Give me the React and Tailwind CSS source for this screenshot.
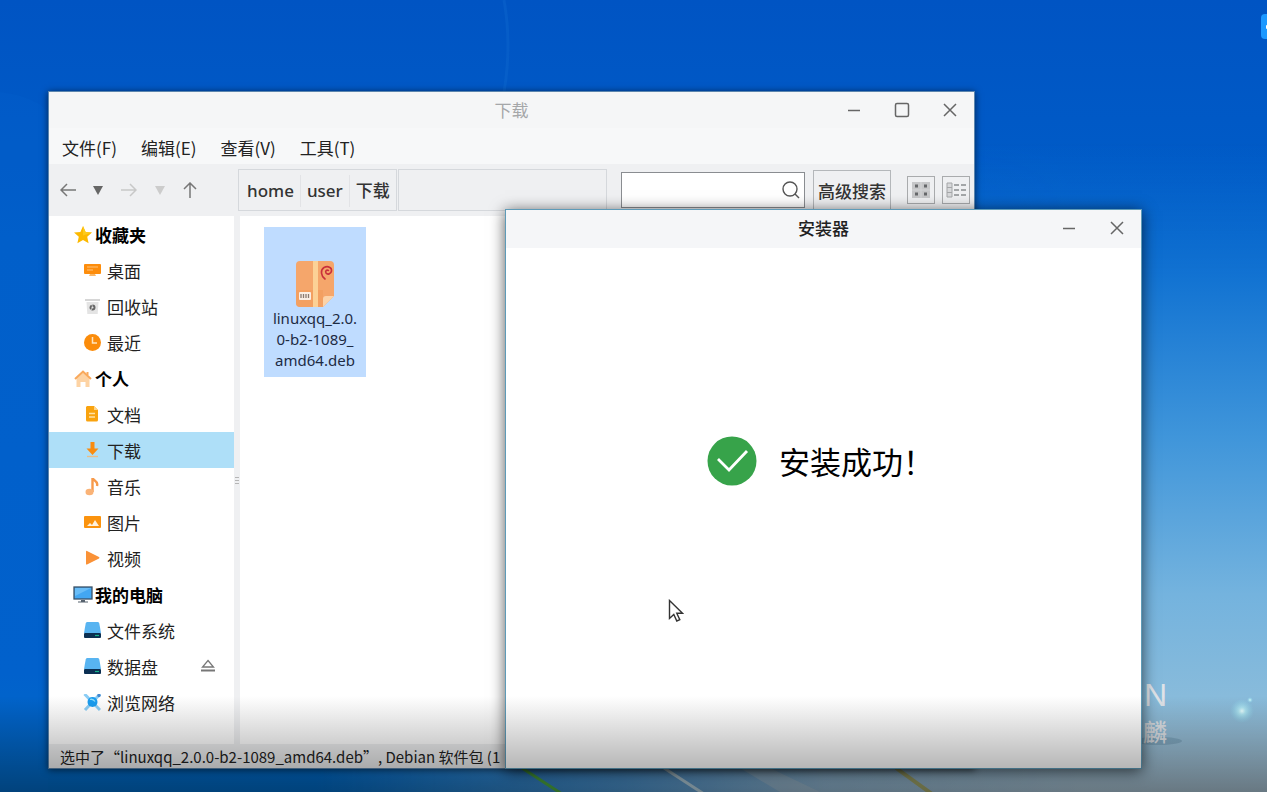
import React from 'react';

const cjk = "font-['Noto_Sans_CJK_SC',sans-serif]";
const latin = "font-['Noto_Sans','Noto_Sans_CJK_SC',sans-serif]";

/* ---------- sidebar icons ---------- */

const StarIcon = () => (
  <svg viewBox="0 0 20 20" className="size-5">
    <path d="M10 1l2.6 5.9 6.4.7-4.8 4.2 1.4 6.4L10 15l-5.6 3.2 1.4-6.4L1 7.6l6.4-.7z" fill="#fcb900" />
    <path d="M10 1l2.6 5.9 6.4.7-9 3z" fill="#fdca1c" />
  </svg>
);

const DesktopIcon = () => (
  <svg viewBox="0 0 18 18" className="size-[18px]">
    <rect x="1" y="2" width="17" height="10" rx="1" fill="#fd8d0c" />
    <path d="M4 5h11M4 8h6" stroke="#ffc27a" strokeWidth="1" />
    <path d="M7 12h5l1 2H6z" fill="#fbb765" />
  </svg>
);

const TrashIcon = () => (
  <svg viewBox="0 0 18 18" className="size-[18px]">
    <rect x="2" y="1" width="15" height="2" fill="#d6d6d6" />
    <path d="M3.500 4h12l-.8 12H4.300z" fill="#e4e4e4" />
    <circle cx="9.500" cy="9.500" r="2" fill="none" stroke="#666" strokeWidth="2" strokeDasharray="3.600 .6" />
  </svg>
);

const ClockIcon = () => (
  <svg viewBox="0 0 18 18" className="size-[18px]">
    <circle cx="9.500" cy="8.500" r="8.500" fill="#fb8c0b" />
    <path d="M9.500 3v6H14" fill="none" stroke="#ffe3bd" strokeWidth="1.500" />
  </svg>
);

const HomeIcon = () => (
  <svg viewBox="0 0 20 20" className="size-5">
    <path d="M3.500 9l6.500-6 6.500 6v9h-4v-5h-5v5h-4z" fill="#fdd3a4" />
    <path d="M2 10l8-7.500 8 7.500" fill="none" stroke="#f9a95c" strokeWidth="2" />
    <path d="M14.500 3v3" stroke="#f9a95c" strokeWidth="2" />
  </svg>
);

const DocIcon = () => (
  <svg viewBox="0 0 18 18" className="size-[18px]">
    <path d="M4 0h7l4 4v10a1.500 1.500 0 01-1.500 1.500h-9A1.500 1.500 0 013 14V1z" fill="#f9a30f" />
    <path d="M11 0l4 4h-4z" fill="#ffd58a" />
    <path d="M6 7.500h6M6 11h6" stroke="#ffe2a6" strokeWidth="1.400" />
  </svg>
);

const DownloadIcon = () => (
  <svg viewBox="0 0 18 18" className="size-[18px]">
    <path d="M7.500 0h4v6.500h4l-6 6.500-6-6.500h4z" fill="#f98c10" />
    <path d="M4 14.500h11" stroke="#e9bf8a" strokeWidth="1.400" />
  </svg>
);

const MusicIcon = () => (
  <svg viewBox="0 0 18 18" className="size-[18px]">
    <path d="M9.500 14V0c1.500 3.500 6 2.500 4.500 8" fill="none" stroke="#f79a4b" strokeWidth="2.400" />
    <ellipse cx="6.500" cy="14" rx="4" ry="3.200" fill="#fab377" />
  </svg>
);

const ImageIcon = () => (
  <svg viewBox="0 0 18 18" className="size-[18px]">
    <rect x="1" y="2" width="17" height="12" rx="1" fill="#fb930e" />
    <path d="M4 12l3-3 2 2 3-5 4 6z" fill="#fff1dd" />
  </svg>
);

const VideoIcon = () => (
  <svg viewBox="0 0 18 18" className="size-[18px]">
    <path d="M3 1.500q0-1 1-.5l12 6q1 .7 0 1.400l-12 6q-1 .5-1-.5z" fill="#fa9237" />
  </svg>
);

const ComputerIcon = () => (
  <svg viewBox="0 0 20 20" className="size-5">
    <rect x="1" y="2" width="18" height="12" fill="#43a7f2" stroke="#3b5166" strokeWidth="1.300" />
    <path d="M2 3h16L2 11z" fill="#69bdf7" />
    <path d="M8 15h4v1.500h3v1H5v-1h3z" fill="#56626e" />
  </svg>
);

const DiskIcon = () => (
  <svg viewBox="0 0 18 18" className="size-[18px]">
    <path d="M4 0h11q1 0 1.300 1.500L18 11H1L2.700 1.500Q3 0 4 0z" fill="#58b4f1" />
    <rect x="1" y="11" width="17" height="5" rx="1" fill="#0b2f52" />
    <path d="M12 13.500h4" stroke="#19b48b" strokeWidth="1.200" />
  </svg>
);

const NetworkIcon = () => (
  <svg viewBox="0 0 18 18" className="size-[18px]">
    <path d="M1.500 0l15.500 16M17 0L2 16" stroke="#8bcdf5" strokeWidth="3" />
    <circle cx="9.500" cy="8" r="5" fill="#1a9df0" />
    <path d="M7 5.500q3-1 5 2" fill="none" stroke="#8fe0fb" strokeWidth="1.300" />
    <circle cx="16" cy="1.500" r="1.700" fill="#4388cf" />
  </svg>
);

const EjectIcon = () => (
  <svg viewBox="0 0 16 14" className="h-3.5 w-4" fill="none" stroke="#777" strokeWidth="1.300">
    <path d="M8 1.500l5.500 6.500h-11z" />
    <path d="M1 11.500h14" strokeWidth="2" />
  </svg>
);

const DebIcon = () => (
  <svg viewBox="0 0 38 48" className="h-12 w-[38px]">
    <path d="M4 1h30q4 0 4 4v31L27 47H4q-4 0-4-4V5q0-4 4-4z" fill="#f5a66b" />
    <path d="M0 30h27v17H4q-4 0-4-4z" fill="#f29a58" opacity=".5" />
    <rect x="17" y="1" width="5" height="46" fill="#fcd196" />
    <path d="M27 47V39q0-3 3-3h8z" fill="#fcd3a8" />
    <rect x="3" y="32" width="12" height="8" rx="1" fill="#faeee4" />
    <path d="M5 34v4M7.500 34v4M10 34v4M12.500 34v4" stroke="#8a7a70" strokeWidth="1.300" />
    <path d="M29 19c-4-3-5-9-1-11.500 4-2 8 0 7.500 3.500-.5 3-4 4-5.500 2-1-2 .5-3.500 2.500-2.500" fill="none" stroke="#c9303b" strokeWidth="1.600" strokeLinecap="round" />
  </svg>
);

/* ---------- window parts ---------- */

const WindowButton = ({ label, children }) => (
  <button aria-label={label} className="flex h-8 w-12 items-center justify-center">
    <svg viewBox="0 0 16 16" className="size-4" fill="none" stroke="#666" strokeWidth="1.500">
      {children}
    </svg>
  </button>
);

const MinimizeButton = () => <WindowButton label="最小化"><path d="M2 8.500h12" /></WindowButton>;
const MaximizeButton = () => <WindowButton label="最大化"><rect x="1.500" y="1.500" width="13" height="13" rx="1.500" /></WindowButton>;
const CloseButton = () => <WindowButton label="关闭"><path d="M2 2l12 12M14 2L2 14" /></WindowButton>;

const sections = [
  {
    title: '收藏夹',
    icon: StarIcon,
    items: [
      { name: '桌面', icon: DesktopIcon },
      { name: '回收站', icon: TrashIcon },
      { name: '最近', icon: ClockIcon },
    ],
  },
  {
    title: '个人',
    icon: HomeIcon,
    items: [
      { name: '文档', icon: DocIcon },
      { name: '下载', icon: DownloadIcon, active: true },
      { name: '音乐', icon: MusicIcon },
      { name: '图片', icon: ImageIcon },
      { name: '视频', icon: VideoIcon },
    ],
  },
  {
    title: '我的电脑',
    icon: ComputerIcon,
    items: [
      { name: '文件系统', icon: DiskIcon },
      { name: '数据盘', icon: DiskIcon, eject: true },
      { name: '浏览网络', icon: NetworkIcon },
    ],
  },
];

const Sidebar = () => (
  <nav aria-label="位置" className="w-[185px] shrink-0 bg-white text-[17px] text-[#222]">
    {sections.map(({ title, icon: SectionIcon, items }) => (
      <section key={title}>
        <h3 className="flex h-9 items-center gap-0.5 pt-0.5 pl-6 font-bold text-black">
          <SectionIcon />
          {title}
        </h3>
        <ul>
          {items.map(({ name, icon: Icon, active, eject }) => (
            <li key={name} className={active ? 'flex h-9 items-center bg-[#aedff8] pr-[18px]' : 'flex h-9 items-center pr-[18px]'}>
              <button className="flex h-9 flex-1 items-center gap-1.5 pt-0.5 pl-[34px] text-left">
                <Icon />
                {name}
              </button>
              {eject && <button aria-label="弹出"><EjectIcon /></button>}
            </li>
          ))}
        </ul>
      </section>
    ))}
  </nav>
);

const NavButtons = () => (
  <div className="flex w-[189px] shrink-0 items-center pl-1">
    <button aria-label="后退" className="flex w-[30px] justify-center">
      <svg viewBox="0 0 16 16" className="size-4" fill="none" stroke="#777" strokeWidth="1.500"><path d="M16 8H1M7 2L1 8l6 6" /></svg>
    </button>
    <button aria-label="后退历史" className="flex w-[30px] justify-center">
      <svg viewBox="0 0 10 10" className="size-2.5"><path d="M0 1h10L5 10z" fill="#666" /></svg>
    </button>
    <button aria-label="前进" className="flex w-8 justify-center">
      <svg viewBox="0 0 16 16" className="size-4" fill="none" stroke="#c8c8c8" strokeWidth="1.500"><path d="M0 8h15M9 2l6 6-6 6" /></svg>
    </button>
    <button aria-label="前进历史" className="flex w-[30px] justify-center">
      <svg viewBox="0 0 10 10" className="size-2.5"><path d="M0 1h10L5 10z" fill="#ccc" /></svg>
    </button>
    <button aria-label="上一级" className="flex w-[30px] justify-center">
      <svg viewBox="0 0 16 16" className="size-4" fill="none" stroke="#777" strokeWidth="1.500"><path d="M8 16V1M2 7l6-6 6 6" /></svg>
    </button>
  </div>
);

const Toolbar = () => (
  <div className="flex h-[52px] shrink-0 items-center bg-[#eff0f2] pr-1">
    <NavButtons />
    <div className={`flex h-[42px] items-center border border-[#d5d8dc] pt-0.5 pl-0.5 text-[17px] font-medium text-[#333] ${latin}`}>
      <button className="h-8 px-1.5">home</button>
      <button className="h-8 border-l border-[#e2e3e6] px-1.5">user</button>
      <button className="h-8 border-l border-[#e2e3e6] px-1.5">下载</button>
    </div>
    <div className="ml-px h-[42px] flex-1 border border-[#d5d8dc]" />
    <label className="ml-[14px] flex h-9 w-[184px] items-center border border-[#8a8d91] bg-white pr-1">
      <input type="text" aria-label="搜索" className="min-w-0 flex-1 bg-transparent px-2 text-[17px] outline-none" />
      <svg viewBox="0 0 18 18" className="size-[18px]" fill="none" stroke="#555" strokeWidth="1.400">
        <circle cx="8" cy="8" r="7" />
        <path d="M13 13l4 4" />
      </svg>
    </label>
    <button className="ml-2 h-10 border border-[#b4b7ba] px-1 pt-0.5 text-[17px] font-medium text-[#333]">高级搜索</button>
    <button aria-label="图标视图" className="ml-4 flex size-7 items-center justify-center border border-[#a9abad]">
      <svg viewBox="0 0 18 16" className="h-4 w-[18px]">
        <rect width="18" height="16" fill="#c6c7c9" />
        <path d="M3 4h3M12 4h3M3 12h3M12 12h3" stroke="#66686b" strokeWidth="3" />
        <path d="M9 0v16M0 8h18" stroke="#d4d5d7" />
      </svg>
    </button>
    <button aria-label="列表视图" className="ml-[7px] flex size-7 items-center justify-center border border-[#a9abad]">
      <svg viewBox="0 0 20 16" className="h-4 w-5">
        <path d="M1 1h5v14H1zM1 5.500h5M1 10.500h5" fill="#d8d9db" stroke="#a4a6a8" />
        <path d="M8 3h12M8 8h12M8 13h12" stroke="#8b8d90" strokeWidth="1.500" strokeDasharray="5 2" />
      </svg>
    </button>
  </div>
);

const FileManager = () => (
  <section aria-label="下载" className="absolute top-[91px] right-[292px] bottom-[23px] left-[48px] flex flex-col border border-[#5c86ae] bg-[#eff0f2] shadow-[0_1px_7px_rgba(0,0,0,0.6)]">
    <header className="grid h-9 shrink-0 grid-cols-[1fr_auto_1fr] items-center bg-[#f5f6f7]">
      <span />
      <h2 className="text-[17px] text-[#a5a7a9]">下载</h2>
      <div className="flex items-center justify-end">
        <MinimizeButton />
        <MaximizeButton />
        <CloseButton />
      </div>
    </header>
    <div className="flex h-9 shrink-0 items-center gap-6 bg-[#f7f8f9] px-[13px] pt-1 text-[17px] text-[#222]">
      <button>文件(F)</button>
      <button>编辑(E)</button>
      <button>查看(V)</button>
      <button>工具(T)</button>
    </div>
    <Toolbar />
    <div className="flex min-h-0 flex-1">
      <Sidebar />
      <div className="flex w-1.5 shrink-0 flex-col items-center justify-center gap-0.5 bg-[#eff0f2]">
        <span className="h-px w-1 bg-[#b5b5b5]" />
        <span className="h-px w-1 bg-[#b5b5b5]" />
        <span className="h-px w-1 bg-[#b5b5b5]" />
      </div>
      <main className="flex-1 bg-white px-6 pt-[11px]">
        <button className={`flex h-[150px] w-[102px] flex-col items-center justify-end bg-[#bfdcff] pb-1.5 text-[15px] leading-[21px] text-[#1d2b44] ${latin}`}>
          <DebIcon />
          <span>linuxqq_2.0.<br />0-b2-1089_<br />amd64.deb</span>
        </button>
      </main>
    </div>
    <footer className="flex h-6 shrink-0 items-center overflow-hidden bg-[#eff0f1] px-[11px] pt-0.5 text-[15px] whitespace-nowrap text-[#222]">
      选中了“linuxqq_2.0.0-b2-1089_amd64.deb”, Debian 软件包 (1
    </footer>
  </section>
);

const Installer = () => (
  <section aria-label="安装器" className="absolute top-[209px] right-[125px] bottom-[23px] left-[505px] flex flex-col border border-[#5e9bb8] bg-white shadow-[0_2px_14px_rgba(0,0,0,0.65)]">
    <header className="grid h-[38px] shrink-0 grid-cols-[1fr_auto_1fr] items-center bg-[#f5f6f8] pb-[3px]">
      <span />
      <h2 className="text-[17px] font-medium text-[#222]">安装器</h2>
      <div className="flex items-center justify-end">
        <MinimizeButton />
        <CloseButton />
      </div>
    </header>
    <div className="flex items-center justify-center gap-[22px] pt-[188px] pr-1.5">
      <svg viewBox="0 0 50 50" className="size-[50px]">
        <circle cx="25" cy="25" r="24.500" fill="#37a34a" />
        <path d="M11 23l11 11 18-19" fill="none" stroke="#fff" strokeWidth="2.800" />
      </svg>
      <p className="text-[31px] leading-[50px] text-black">安装成功！</p>
    </div>
  </section>
);

const Wallpaper = () => (
  <svg aria-hidden="true" viewBox="0 0 1267 792" preserveAspectRatio="none" className="absolute inset-0 size-full">
    <defs>
      <linearGradient id="sky" x1="0" y1="0" x2="0" y2="1">
        <stop offset="0" stopColor="#0054c3" />
        <stop offset=".3" stopColor="#005ec9" />
        <stop offset=".85" stopColor="#0060cb" />
        <stop offset="1" stopColor="#006bc6" />
      </linearGradient>
      <linearGradient id="haze" x1="0" y1="0" x2="0" y2="1">
        <stop offset=".18" stopColor="#0868cc" stopOpacity="0" />
        <stop offset=".35" stopColor="#1273d2" />
        <stop offset=".55" stopColor="#3f95da" />
        <stop offset=".75" stopColor="#74b3de" />
        <stop offset=".88" stopColor="#88bbdb" />
        <stop offset="1" stopColor="#a8c2d2" />
      </linearGradient>
      <linearGradient id="fade" x1="0" y1="0" x2="1" y2="0">
        <stop offset=".25" stopColor="#000" />
        <stop offset=".5" stopColor="#777" />
        <stop offset=".65" stopColor="#ddd" />
        <stop offset=".85" stopColor="#fff" />
      </linearGradient>
      <radialGradient id="glow">
        <stop offset="0" stopColor="#eaffff" />
        <stop offset=".3" stopColor="#b4ecf6" stopOpacity=".8" />
        <stop offset="1" stopColor="#8cd8ee" stopOpacity="0" />
      </radialGradient>
      <mask id="right"><rect width="1267" height="792" fill="url(#fade)" /></mask>
    </defs>
    <rect width="1267" height="792" fill="url(#sky)" />
    <path d="M0 92q35 4 48 20v680H0z" fill="#0a6fd6" opacity=".12" />
    <path d="M504 0q8 45 0 92" fill="none" stroke="#1f7ddc" strokeWidth="3" opacity=".2" />
    <rect width="1267" height="792" fill="url(#haze)" mask="url(#right)" />
    <path d="M522 768l40 26" stroke="#4fae42" strokeWidth="3" />
    <path d="M664 768l40 26" stroke="#b8d4e2" strokeWidth="3" />
    <path d="M740 768h30l50 24h-40z" fill="#b5c5d0" opacity=".4" />
    <path d="M896 768l36 26" stroke="#a8a552" strokeWidth="4" opacity=".8" />
    <ellipse cx="1158" cy="741" rx="24" ry="4" fill="#3f6b85" opacity=".25" />
    <circle cx="1242" cy="711" r="12" fill="url(#glow)" />
    <circle cx="1250" cy="700" r="3" fill="url(#glow)" />
  </svg>
);

export default function App() {
  return (
    <div className={`relative min-h-screen w-full overflow-hidden bg-[#005cc9] ${cjk}`}>
      <Wallpaper />

      <div aria-hidden="true" className="absolute right-[100px] bottom-[44px] flex flex-col items-end text-[#dfe3e8]">
        <span className="font-['Liberation_Sans',sans-serif] text-[32px] leading-[36px]">N</span>
        <span className="text-[24px] leading-[35px] font-medium">麟</span>
      </div>

      {/* edge of the side dock */}
      <button aria-label="展开" className="absolute top-[14px] right-0 flex h-[25px] w-1.5 items-center justify-end rounded-l bg-[#1c98ff]">
        <span className="h-1 w-px rounded-l bg-white" />
      </button>

      <FileManager />
      <Installer />

      <svg aria-hidden="true" viewBox="0 0 16 24" className="absolute top-[599px] left-[668px] h-6 w-4">
        <path d="M1.500 1.500v18l4.300-4 3 6.500 3-1.400-3-6.300h5.700z" fill="#fff" stroke="#333" strokeWidth="1.400" />
      </svg>

      <div className="pointer-events-none absolute inset-x-0 bottom-0 h-24 bg-linear-to-b from-transparent to-black/38" />
    </div>
  );
}
